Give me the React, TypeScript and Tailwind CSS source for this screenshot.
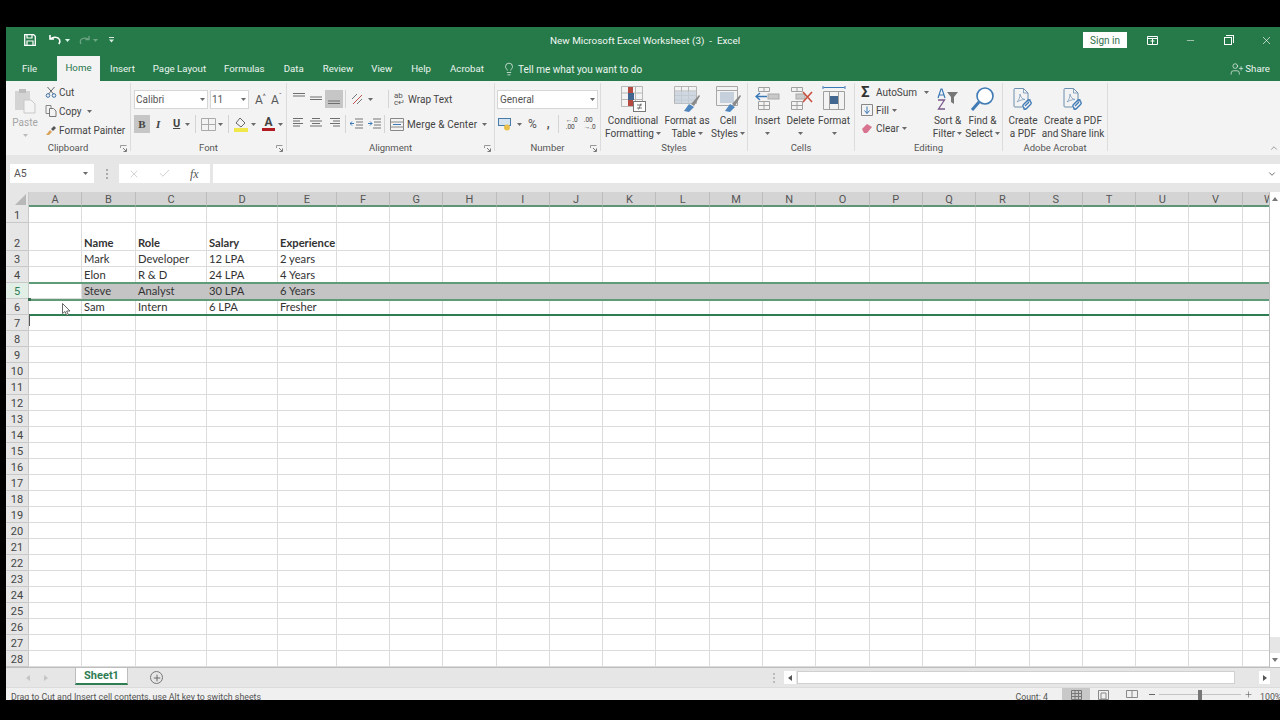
import { ReactNode } from "react";
import { Minus, Plus, X, Check, Lightbulb, UserPlus, ChevronUp, ChevronDown } from "lucide-react";

const UI_FONT = "font-['Roboto',sans-serif]";

const Caret = ({ className = "" }: { className?: string }) => (
  <svg width="5" height="3" viewBox="0 0 5 3" className={`shrink-0 ${className}`}>
    <path d="M0 0h5L2.5 3z" fill="#6a6a6a" />
  </svg>
);

const Launcher = () => (
  <svg width="7" height="7" viewBox="0 0 7 7" className="shrink-0">
    <path d="M.5 3V.5H6.5" stroke="#999" fill="none" />
    <path d="M3 3l3 3M6.5 3.5v3h-3" stroke="#777" fill="none" />
  </svg>
);

const Sep = ({ className = "" }: { className?: string }) => (
  <div className={`w-px h-[18px] bg-[#d4d4d4] shrink-0 ${className}`} />
);

const Group = ({ width, label, launcher, children }: { width: string; label: string; launcher?: boolean; children: ReactNode }) => (
  <div className={`${width} shrink-0 h-[68px] mt-[2px] border-r border-[#dcdcdc] flex flex-col relative`}>
    <div className="h-[58px] flex shrink-0">{children}</div>
    <div className="h-[14px] shrink-0 flex items-center justify-center text-[9.5px] leading-none text-[#555] whitespace-nowrap">{label}</div>
    {launcher && (
      <div className="absolute right-[3px] bottom-[-1px]">
        <Launcher />
      </div>
    )}
  </div>
);

const BigButton = ({ width, icon, lines, caret }: { width: string; icon: ReactNode; lines: string[]; caret?: boolean }) => (
  <div className={`${width} shrink-0 flex flex-col items-center pt-[2px] text-[10px] leading-[13px] text-[#444]`}>
    <div className="h-[28px] mb-[1px] shrink-0 flex items-center justify-center">{icon}</div>
    <div className="whitespace-nowrap h-[13px] shrink-0">{lines[0]}</div>
    <div className="whitespace-nowrap flex items-center gap-[2px] h-[13px] shrink-0">
      {lines[1]}
      {caret && <Caret />}
    </div>
  </div>
);

const AlignLines = ({ widths, y = 0 }: { widths: number[]; y?: number }) => (
  <svg width="12" height="12" viewBox="0 0 12 12">
    {widths.map((w, i) => (
      <rect key={i} x={w < 0 ? 12 + w : w === 8 ? 2 : 0} y={y + i * 2.5} width={Math.abs(w)} height="1" fill="#6e6e6e" />
    ))}
  </svg>
);

const PdfIcon = () => (
  <svg width="24" height="24" viewBox="0 0 24 24" fill="none">
    <path d="M3 2.500a1 1 0 0 1 1-1h8.500l4.500 4.500v9M11 20H4a1 1 0 0 1-1-1V2.500" stroke="#6d8fb0" strokeWidth="1" />
    <path d="M12.500 1.500v4.500h4.500" stroke="#6d8fb0" strokeWidth=".8" />
    <path d="M6 15c2-2 3-5 3-8 .6 3 2 5 5 5.500-3 0-5.500 1-8 2.500z" stroke="#7a9cbd" strokeWidth=".8" />
    <path d="M13.500 21.500l-1-1a2 2 0 0 1 0-3l4-4a2 2 0 0 1 3 0M18.500 13.500l1 1a2 2 0 0 1 0 3l-4 4a2 2 0 0 1-3 0" stroke="#3f7ab5" strokeWidth="1.400" />
    <path d="M14 19l4-4" stroke="#3f7ab5" strokeWidth="1.200" />
  </svg>
);

const StyleGridIcon = ({ children }: { children: ReactNode }) => (
  <svg width="30" height="28" viewBox="0 0 30 28" fill="none">
    {children}
  </svg>
);

const Cursor = () => (
  <svg width="9" height="14" viewBox="0 0 9 14" className="absolute left-[56px] top-[111px]">
    <path d="M.5.5v10l2.500-2 1.800 4 1.600-.7L4.600 8H8z" fill="#fff" stroke="#444" strokeWidth=".8" />
  </svg>
);

const columns = ["A", "B", "C", "D", "E", "F", "G", "H", "I", "J", "K", "L", "M", "N", "O", "P", "Q", "R", "S", "T", "U", "V", "W"];
const rowNumbers = Array.from({ length: 28 }, (_, i) => i + 1);

const cells: Record<number, string[]> = {
  2: ["Name", "Role", "Salary", "Experience"],
  3: ["Mark", "Developer", "12 LPA", "2 years"],
  4: ["Elon", "R & D", "24 LPA", "4 Years"],
  5: ["Steve", "Analyst", "30 LPA", "6 Years"],
  6: ["Sam", "Intern", "6 LPA", "Fresher"],
};

const tabs = [
  { label: "Insert", cls: "ml-[10px]" },
  { label: "Page Layout", cls: "ml-[18px]" },
  { label: "Formulas", cls: "ml-[18px]" },
  { label: "Data", cls: "ml-[19px]" },
  { label: "Review", cls: "ml-[19px]" },
  { label: "View", cls: "ml-[18px]" },
  { label: "Help", cls: "ml-[19px]" },
  { label: "Acrobat", cls: "ml-[19px]" },
];

const TitleBar = () => (
  <div className="h-[28px] bg-[#267a4a] flex items-center pb-[2px] relative text-white shrink-0">
    <svg width="12" height="12" viewBox="0 0 12 12" className="ml-[18px]" fill="none">
      <path d="M.7.7h9l1.600 1.600v9H.7z" stroke="#fff" strokeWidth="1.300" />
      <path d="M3 1v3h5V1M3 11V7h6v4" stroke="#fff" strokeWidth="1.200" />
    </svg>
    <svg width="14" height="12" viewBox="0 0 14 12" className="ml-[13px]" fill="none">
      <path d="M1 1v4h4" stroke="#fff" strokeWidth="1.600" />
      <path d="M1.500 5C4 2.400 9 2.600 10.500 5.500c.8 1.600.4 3.200-.7 4.500" stroke="#fff" strokeWidth="1.600" />
    </svg>
    <svg width="5" height="3" viewBox="0 0 5 3" className="ml-[2px]">
      <path d="M0 0h5L2.500 3z" fill="#dfe" />
    </svg>
    <svg width="13" height="10" viewBox="0 0 13 10" className="ml-[7px]" fill="none">
      <path d="M12 1v3.500H8.400" stroke="#6da585" strokeWidth="1.300" />
      <path d="M11.600 4.500C9.500 2.400 5 2.600 3.600 5 3 6.300 3.200 7.600 4 9" stroke="#6da585" strokeWidth="1.300" />
    </svg>
    <svg width="5" height="3" viewBox="0 0 5 3" className="ml-[3px]">
      <path d="M0 0h5L2.500 3z" fill="#6da585" />
    </svg>
    <svg width="5" height="6" viewBox="0 0 5 6" className="ml-[11px]">
      <path d="M0 0h5v1H0zM0 2.500h5L2.500 5.500z" fill="#d8ebdf" />
    </svg>
    <div className="absolute left-[544px] top-[6px] text-[9.900px] leading-[15px] text-[#f2f8f4] whitespace-nowrap">
      New Microsoft Excel Worksheet (3)&nbsp; -&nbsp; Excel
    </div>
    <div className="ml-auto h-[16px] w-[44px] bg-white text-[#2f6f4b] text-[10px] flex items-center justify-center">Sign in</div>
    <svg width="11" height="9" viewBox="0 0 11 9" className="ml-[20px]" fill="none">
      <path d="M.5.5h10v8H.5zM.5 2.500h10M5.500 2.500v6M3.500 5h4" stroke="#fff" />
    </svg>
    <Minus size={11} strokeWidth={1.200} className="ml-[27px]" />
    <div className="ml-[28px] relative w-[10px] h-[10px]">
      <div className="absolute left-0 bottom-0 w-[8px] h-[8px] border border-white" />
      <div className="absolute right-0 top-0 w-[8px] h-[8px] border-t border-r border-white" />
    </div>
    <X size={13} strokeWidth={1.200} className="ml-[26px] mr-[7px]" />
  </div>
);

const TabRow = () => (
  <div className="h-[26px] bg-[#267a4a] flex items-end text-[9.700px] text-[#eaf4ee] shrink-0">
    <div className="h-[24px] ml-[16px] w-[16px] flex items-center">File</div>
    <div className="h-[25px] w-[43px] ml-[19px] bg-[#f3f3f3] text-[#27754a] flex items-center justify-center">Home</div>
    {tabs.map((t) => (
      <div key={t.label} className={`h-[24px] flex items-center ${t.cls}`}>
        {t.label}
      </div>
    ))}
    <div className="h-[24px] flex items-center ml-[18px] gap-[2px]">
      <Lightbulb size={14} strokeWidth={1.300} />
      <span className="text-[10px]">Tell me what you want to do</span>
    </div>
    <div className="h-[24px] flex items-center ml-auto mr-[10px] gap-[1px]">
      <UserPlus size={14} strokeWidth={1.200} />
      <span>Share</span>
    </div>
  </div>
);

const Ribbon = () => (
  <div className="h-[74px] bg-[#f3f3f3] flex text-[10px] text-[#444] shrink-0 relative">
    <Group width="w-[125px]" label="Clipboard" launcher>
      <div className="w-[38px] flex flex-col items-center">
        <svg width="22" height="26" viewBox="0 0 22 26" className="mt-[5px] shrink-0" fill="none">
          <rect x="1" y="3" width="15" height="19" fill="#d4d4d4" />
          <rect x="5" y="1" width="7" height="4" fill="#bdbdbd" />
          <path d="M10 12h7l4 4v9H10z" fill="#f4f4f4" stroke="#c9c9c9" />
        </svg>
        <div className="text-[#a5a5a5] leading-[12px] mt-[3px]">Paste</div>
        <Caret className="mt-[5px] opacity-40" />
      </div>
      <div className="flex flex-col ml-[1px] gap-[1px]">
        <div className="h-[18px] flex items-center gap-[2px]">
          <svg width="12" height="12" viewBox="0 0 12 12" fill="none">
            <path d="M2.500 1l6 7M9.500 1l-6 7" stroke="#666" />
            <circle cx="3" cy="9.500" r="1.800" stroke="#3c6fa5" />
            <circle cx="9" cy="9.500" r="1.800" stroke="#3c6fa5" />
          </svg>
          Cut
        </div>
        <div className="h-[18px] flex items-center gap-[2px]">
          <svg width="12" height="12" viewBox="0 0 12 12" fill="none">
            <path d="M1 .5h5v8H1z" stroke="#888" />
            <path d="M4.500 3.500h4l2.500 2.500v5.500h-6.500z" fill="#f3f3f3" stroke="#777" />
          </svg>
          Copy
          <Caret className="ml-[3px]" />
        </div>
        <div className="h-[18px] flex items-center gap-[2px] whitespace-nowrap">
          <svg width="12" height="12" viewBox="0 0 12 12" fill="none">
            <path d="M1 11l4-5 2 2-3 3z" fill="#d9a25a" />
            <path d="M6 5l3-3 2 2-3 3z" fill="#555" />
          </svg>
          Format Painter
        </div>
      </div>
    </Group>

    <Group width="w-[156px]" label="Font" launcher>
      <div className="flex flex-col pl-[3px] pt-[7px]">
        <div className="flex items-center h-[19px]">
          <div className="w-[74px] h-[19px] bg-white border border-[#d6d6d6] flex items-center pl-[1px] pr-[2px] justify-between text-[#555]">
            Calibri
            <Caret />
          </div>
          <div className="w-[39px] h-[19px] ml-[2px] bg-white border border-[#d6d6d6] flex items-center pl-[1px] pr-[2px] justify-between text-[#555]">
            11
            <Caret />
          </div>
          <div className="ml-[6px] text-[12px] text-[#555] w-[16px] leading-none whitespace-nowrap">
            A<span className="text-[7px] align-top">^</span>
          </div>
          <div className="text-[12px] text-[#555] leading-none whitespace-nowrap">
            A<span className="text-[7px] align-top">ˇ</span>
          </div>
        </div>
        <div className="flex items-center h-[20px] mt-[5px]">
          <div className="w-[16px] h-[18px] bg-[#c6c6c6] flex items-center justify-center font-bold font-['Liberation_Serif',serif] text-[11px]">B</div>
          <div className="ml-[6px] w-[8px] text-[11px] italic font-bold font-['Liberation_Serif',serif]">I</div>
          <div className="ml-[9px] w-[9px] text-[11px] underline font-bold text-[#444]">U</div>
          <Caret className="ml-[3px]" />
          <Sep className="ml-[5px]" />
          <svg width="15" height="13" viewBox="0 0 15 13" className="ml-[5px]" fill="none">
            <path d="M.5.5h14v12H.5zM7.500.5v12M.5 6.500h14" stroke="#aaa" />
          </svg>
          <Caret className="ml-[2px]" />
          <Sep className="ml-[5px]" />
          <svg width="16" height="15" viewBox="0 0 16 15" className="ml-[4px]" fill="none">
            <path d="M7 1l5 5-4 4-5-4z" stroke="#666" />
            <rect x="1" y="11" width="14" height="4" fill="#f0e84a" />
          </svg>
          <Caret className="ml-[2px]" />
          <div className="ml-[6px] w-[13px] flex flex-col items-center">
            <span className="font-bold text-[12px] leading-[11px] text-[#444]">A</span>
            <div className="w-[13px] h-[3px] bg-[#b01a20]" />
          </div>
          <Caret className="ml-[3px]" />
        </div>
      </div>
    </Group>

    <Group width="w-[208px]" label="Alignment" launcher>
      <div className="flex flex-col pl-[6px] pt-[6px]">
        <div className="flex items-center h-[20px]">
          <AlignLines widths={[12, 12, 0]} />
          <div className="ml-[5px]"><AlignLines widths={[0, 12, 12]} y={1} /></div>
          <div className="ml-[3px] w-[18px] h-[18px] bg-[#c6c6c6] flex items-center justify-center">
            <AlignLines widths={[0, 12, 12]} y={5} />
          </div>
          <Sep className="ml-[2px]" />
          <svg width="14" height="13" viewBox="0 0 14 13" className="ml-[5px]" fill="none">
            <path d="M2 11l9-9" stroke="#c0504d" />
            <path d="M1 6l5-5M6 11l5-5" stroke="#777" />
          </svg>
          <Caret className="ml-[3px]" />
          <Sep className="ml-[15px]" />
          <div className="ml-[5px] text-[8px] leading-[7px] text-[#555] w-[13px]">ab<br />c↵</div>
          <span className="ml-[1px]">Wrap Text</span>
        </div>
        <div className="flex items-center h-[20px] mt-[5px]">
          <AlignLines widths={[10, 7, 10, 7]} />
          <div className="ml-[5px]"><AlignLines widths={[8, 12, 8, 12]} /></div>
          <div className="ml-[6px]"><AlignLines widths={[-10, -7, -10, -7]} /></div>
          <Sep className="ml-[5px]" />
          <div className="ml-[4px]"><svg width="13" height="12" viewBox="0 0 13 12" fill="none"><path d="M5 1h8M6 4h7M6 7h7M5 10h8" stroke="#777" /><path d="M0 5.500h4M2 3.500l-2 2 2 2" stroke="#3a79b8" /></svg></div>
          <div className="ml-[5px]"><svg width="13" height="12" viewBox="0 0 13 12" fill="none"><path d="M5 1h8M6 4h7M6 7h7M5 10h8" stroke="#777" /><path d="M0 5.500h4M2 3.500l2 2-2 2" stroke="#3a79b8" /></svg></div>
          <Sep className="ml-[3px]" />
          <svg width="14" height="13" viewBox="0 0 14 13" className="ml-[5px]" fill="none">
            <path d="M.5.5h13v12H.5zM.5 4h13M.5 9h13" stroke="#888" />
            <path d="M3 6.500h8" stroke="#3a79b8" />
          </svg>
          <span className="ml-[3px] whitespace-nowrap tracking-[0.1px]">Merge &amp; Center</span>
          <Caret className="ml-[5px]" />
        </div>
      </div>
    </Group>

    <Group width="w-[106px]" label="Number" launcher>
      <div className="flex flex-col pl-[2px] pt-[7px]">
        <div className="w-[101px] h-[19px] bg-white border border-[#d6d6d6] flex items-center px-[2px] justify-between text-[#555]">
          General
          <Caret />
        </div>
        <div className="flex items-center h-[20px] mt-[5px] pl-[1px]">
          <svg width="15" height="13" viewBox="0 0 15 13" fill="none">
            <rect x=".5" y=".5" width="12" height="7" fill="#d6e4f0" stroke="#4a7ba8" />
            <circle cx="9" cy="9.500" r="3" fill="#e8c14a" />
          </svg>
          <Caret className="ml-[4px]" />
          <span className="ml-[6px] text-[12px] leading-none text-[#555]">%</span>
          <span className="ml-[10px] font-bold text-[12px] leading-none text-[#555]">,</span>
          <Sep className="ml-[8px]" />
          <div className="ml-[7px] text-[6.500px] leading-[7px] text-[#444] w-[14px]">←.0<br />.00</div>
          <div className="ml-[4px] text-[6.500px] leading-[7px] text-[#444] w-[14px]">.00<br />→.0</div>
        </div>
      </div>
    </Group>

    <Group width="w-[147px]" label="Styles">
      <BigButton width="w-[66px] ml-[-1px]" caret lines={["Conditional", "Formatting"]} icon={
        <StyleGridIcon>
          <path d="M3.500 1.500h21v20h-21zM3.500 8h21M3.500 14.500h21M10.500 1.500v20M17.500 1.500v20" stroke="#b8b8b8" />
          <rect x="10" y="2" width="5" height="6" fill="#b5483f" />
          <rect x="10" y="8" width="6" height="7" fill="#41668f" />
          <rect x="10" y="15" width="5" height="6" fill="#b5483f" />
          <rect x="15.500" y="16.500" width="12" height="10" fill="#fff" stroke="#777" />
          <path d="M19 20h5M19 23h5M23 18.500l-2.500 6" stroke="#555" strokeWidth=".8" />
        </StyleGridIcon>
      } />
      <BigButton width="w-[42px]" caret lines={["Format as", "Table"]} icon={
        <StyleGridIcon>
          <path d="M2.500 1.500h22v17h-22zM2.500 6h22M2.500 10.500h22M2.500 15h22M9.500 1.500v17M16.500 1.500v17" stroke="#b5b5b5" />
          <rect x="3" y="6.500" width="21" height="12" fill="#c5d0dc" opacity=".8" />
          <path d="M12 26l5-7 5 3-5 5z" fill="#4e86bd" />
          <path d="M19 19l8-9 1 1-6 10z" fill="#8a8a8a" />
        </StyleGridIcon>
      } />
      <BigButton width="w-[38px] ml-[1px]" caret lines={["Cell", "Styles"]} icon={
        <StyleGridIcon>
          <path d="M3.500 1.500h21v19h-21zM3.500 5.500h21" stroke="#a8a8a8" />
          <rect x="7" y="7" width="14" height="11" fill="#c5d0dc" />
          <path d="M12 26l5-7 5 3-5 5z" fill="#4e86bd" />
          <path d="M19 19l8-9 1 1-6 10z" fill="#8a8a8a" />
        </StyleGridIcon>
      } />
    </Group>

    <Group width="w-[107px]" label="Cells">
      <BigButton width="w-[33px] ml-[3px]" lines={["Insert", ""]} caret icon={
        <svg width="26" height="26" viewBox="0 0 26 26" fill="none">
          <path d="M3.500 1.500h11v4h-11zM9 1.500v4M3.500 15.500h11v8h-11zM9 15.500v8M3.500 19.500h11" stroke="#a0a0a0" />
          <rect x="13" y="8" width="11" height="5" fill="#c9c9c9" stroke="#aaa" />
          <path d="M1 10.500h11M5 7l-4 3.500L5 14" stroke="#3a79b8" strokeWidth="1.400" />
        </svg>
      } />
      <BigButton width="w-[33px]" lines={["Delete", ""]} caret icon={
        <svg width="26" height="26" viewBox="0 0 26 26" fill="none">
          <path d="M3.500 1.500h11v4h-11zM9 1.500v4M3.500 15.500h11v8h-11zM9 15.500v8M3.500 19.500h11" stroke="#a0a0a0" />
          <rect x="8" y="8" width="9" height="5" fill="#c9c9c9" stroke="#aaa" />
          <path d="M15 6l9 10M24 6l-9 10" stroke="#c8503f" strokeWidth="1.600" />
        </svg>
      } />
      <BigButton width="w-[34px]" lines={["Format", ""]} caret icon={
        <svg width="26" height="27" viewBox="0 0 26 27" fill="none">
          <path d="M2.500 1.500h21M2 0v3M24 0v3" stroke="#3a79b8" />
          <path d="M2.500 5.500h21v18h-21zM8.500 5.500v18M17.500 5.500v18" stroke="#a0a0a0" />
          <rect x="9" y="10" width="8" height="8" fill="#41668f" />
        </svg>
      } />
    </Group>

    <Group width="w-[148px]" label="Editing">
      <div className="flex flex-col pl-[6px] w-[78px]">
        <div className="h-[18px] flex items-center gap-[3px] whitespace-nowrap">
          <span className="text-[15px] leading-none text-[#333] w-[12px] font-bold">Σ</span>
          AutoSum
          <Caret className="ml-[4px]" />
        </div>
        <div className="h-[18px] flex items-center gap-[3px]">
          <svg width="12" height="12" viewBox="0 0 12 12" fill="none">
            <path d="M.5.500h11v11H.5z" stroke="#888" />
            <path d="M6 2.500v7M3.500 6.500L6 9.500l2.500-3" stroke="#3a79b8" />
          </svg>
          Fill
          <Caret />
        </div>
        <div className="h-[18px] flex items-center gap-[3px]">
          <svg width="12" height="12" viewBox="0 0 12 12">
            <path d="M1 7l5-5 5 3-5 6H3z" fill="#d8748f" />
          </svg>
          Clear
          <Caret />
        </div>
      </div>
      <BigButton width="w-[35px] ml-[-3px]" caret lines={["Sort &", "Filter"]} icon={
        <svg width="24" height="24" viewBox="0 0 24 24" fill="none">
          <path d="M2 11l3-9h1l3 9M3 8h5" stroke="#3a79b8" strokeWidth="1.200" />
          <path d="M2 13h6.500L2.500 22H9" stroke="#7a5a8a" strokeWidth="1.300" />
          <path d="M11 5h11l-4 5v7l-3-2v-5z" fill="#777" />
        </svg>
      } />
      <BigButton width="w-[35px]" caret lines={["Find &", "Select"]} icon={
        <svg width="26" height="26" viewBox="0 0 26 26" fill="none">
          <circle cx="15" cy="10" r="8" stroke="#3f7ab5" strokeWidth="1.600" fill="#fff" />
          <path d="M9 16l-7 8" stroke="#3f7ab5" strokeWidth="3" />
        </svg>
      } />
    </Group>

    <Group width="w-[105px]" label="Adobe Acrobat">
      <BigButton width="w-[34px] ml-[3px]" lines={["Create", "a PDF"]} icon={<PdfIcon />} />
      <BigButton width="w-[64px] ml-[1px]" lines={["Create a PDF", "and Share link"]} icon={<PdfIcon />} />
    </Group>

    <ChevronUp size={10} strokeWidth={1.500} className="absolute right-[1px] bottom-[2px] text-[#666]" />
  </div>
);

const FormulaBar = () => (
  <div className="h-[37px] bg-[#e6e6e6] flex pt-[9px] shrink-0 text-[#555]">
    <div className="ml-[4px] w-[84px] h-[19px] bg-white flex items-center pl-[4px] pr-[6px] justify-between text-[10.500px]">
      A5
      <Caret />
    </div>
    <div className="ml-[11px] w-[4px] h-[19px] flex flex-col justify-center gap-[2px] items-center">
      <div className="w-[2px] h-[2px] bg-[#aaa]" />
      <div className="w-[2px] h-[2px] bg-[#aaa]" />
      <div className="w-[2px] h-[2px] bg-[#aaa]" />
    </div>
    <div className="ml-[10px] w-[91px] h-[19px] bg-white flex items-center">
      <X size={12} strokeWidth={1.300} className="ml-[9px] text-[#bbb]" />
      <Check size={13} strokeWidth={1.300} className="ml-[18px] text-[#bbb]" />
      <span className="ml-[19px] italic text-[12px] font-['Liberation_Serif',serif] text-[#555]">fx</span>
    </div>
    <div className="ml-[3px] flex-1 h-[19px] bg-white flex items-center justify-end pr-[3px]">
      <ChevronDown size={10} strokeWidth={2} className="text-[#555]" />
    </div>
  </div>
);

const Row = ({ r }: { r: number }) => {
  const selected = r === 5;
  const values = cells[r] ?? [];
  return (
    <>
      <div className={`border-r border-b border-[#c8c8c8] flex items-end justify-center leading-[13px] ${UI_FONT} text-[11px] ${selected ? "bg-[#e1efe6] text-[#2f7d52]" : "bg-[#e6e6e6] text-[#444]"}`}>
        {r}
      </div>
      {columns.map((c, i) => {
        const text = i >= 1 && i <= 4 ? values[i - 1] : undefined;
        const bg = selected && i > 0 ? "bg-[#c4c4c4] border-[#c4c4c4]" : "border-[#dcdcdc]";
        return (
          <div key={c} className={`border-r border-b ${bg} pl-[2px] flex items-end leading-[14px] whitespace-nowrap ${r === 2 ? "font-bold" : ""}`}>
            {text}
          </div>
        );
      })}
    </>
  );
};

const Sheet = () => (
  <div className="flex h-[475px] shrink-0 bg-white overflow-hidden">
    <div className="w-[1263px] shrink-0 relative overflow-hidden">
      <div className="grid w-[1300px] grid-cols-[23px_53px_54px_71px_71px_59px_53px_repeat(17,53.3px)] grid-rows-[15px_16px_28px_repeat(26,16px)] font-['Lato',sans-serif] text-[11.200px] text-[#333]">
        <div className="bg-[#e6e6e6] border-r border-[#c8c8c8] flex items-end justify-end">
          <svg width="11" height="11" viewBox="0 0 11 11" className="mr-[2px] mb-[2px]">
            <path d="M11 0v11H0z" fill="#b8b8b8" />
          </svg>
        </div>
        {columns.map((c) => (
          <div key={c} className={`bg-[#d4d4d4] border-r border-[#bdbdbd] border-b-2 border-b-[#5f9477] flex items-center justify-center pt-[1px] leading-none text-[#555] ${UI_FONT} text-[11px]`}>
            {c}
          </div>
        ))}
        {rowNumbers.map((r) => (
          <Row key={r} r={r} />
        ))}
      </div>
      <div className="absolute left-[23px] right-0 top-[90px] h-[2px] bg-[#5f9a79]" />
      <div className="absolute left-[23px] right-0 top-[107px] h-[2px] bg-[#5f9a79]" />
      <div className="absolute left-[23px] right-0 top-[122px] h-[2px] bg-[#2f7d52]" />
      <div className="absolute left-[22px] top-[106px] w-[3px] h-[3px] bg-[#3b6f52]" />
      <div className="absolute left-[23px] top-[122px] w-px h-[12px] bg-[#555]" />
      <Cursor />
    </div>
    <div className="flex-1 bg-white border-l border-[#c0c0c0] flex flex-col items-center">
      <svg width="6" height="4" viewBox="0 0 6 4" className="mt-[5px]"><path d="M0 4h6L3 0z" fill="#777" /></svg>
      <div className="mt-auto w-full h-[16px] bg-[#e6e6e6]" />
      <div className="w-full h-[14px] flex items-center justify-center">
        <svg width="6" height="4" viewBox="0 0 6 4"><path d="M0 0h6L3 4z" fill="#777" /></svg>
      </div>
    </div>
  </div>
);

const TabBar = () => (
  <div className="h-[20px] bg-[#e6e6e6] border-t border-[#bdbdbd] flex shrink-0 text-[#555]">
    <svg width="4" height="6" viewBox="0 0 4 6" className="ml-[20px] mt-[7px]"><path d="M4 0v6L0 3z" fill="#c4c4c4" /></svg>
    <svg width="4" height="6" viewBox="0 0 4 6" className="ml-[14px] mt-[7px]"><path d="M0 0v6l4-3z" fill="#c4c4c4" /></svg>
    <div className="ml-[27px] w-[53px] h-[17px] pt-[1px] bg-white border-b-2 border-[#2f7d52] border-x border-x-[#bdbdbd] text-[#2f7d52] font-bold text-[11px] flex items-center justify-center">Sheet1</div>
    <div className="ml-[22px] mt-[3px] w-[13px] h-[13px] rounded-full border border-[#777] flex items-center justify-center">
      <Plus size={10} strokeWidth={2} />
    </div>
    <div className="ml-[610px] mt-[5px] flex flex-col gap-[2px]">
      <div className="w-[2px] h-[2px] bg-[#bbb]" />
      <div className="w-[2px] h-[2px] bg-[#bbb]" />
      <div className="w-[2px] h-[2px] bg-[#bbb]" />
    </div>
    <div className="ml-[9px] mt-[3px] w-[12px] h-[13px] bg-white flex items-center justify-center">
      <svg width="4" height="6" viewBox="0 0 4 6"><path d="M4 0v6L0 3z" fill="#555" /></svg>
    </div>
    <div className="ml-[1px] mt-[3px] w-[438px] h-[13px] bg-white border border-[#d0d0d0]" />
    <div className="ml-[24px] mt-[3px] w-[11px] h-[13px] bg-white flex items-center justify-center">
      <svg width="4" height="6" viewBox="0 0 4 6"><path d="M0 0v6l4-3z" fill="#555" /></svg>
    </div>
  </div>
);

const StatusBar = () => (
  <div className="h-[13px] bg-[#f0f0f0] border-t border-[#dcdcdc] flex text-[8.800px] leading-[18px] text-[#555] shrink-0 overflow-hidden">
    <div className="ml-[5px] whitespace-nowrap">Drag to Cut and Insert cell contents, use Alt key to switch sheets</div>
    <div className="ml-auto whitespace-nowrap">Count: 4</div>
    <div className="ml-[14px] w-[28px] h-[13px] bg-[#c8c8c8] flex justify-center pt-[2px]">
      <svg width="11" height="10" viewBox="0 0 11 10" fill="none"><path d="M.5.5h10v9H.5zM4 .5v9M7.500.5v9M.5 3.500h10M.5 6.500h10" stroke="#777" /></svg>
    </div>
    <svg width="11" height="10" viewBox="0 0 11 10" className="ml-[8px] mt-[2px] shrink-0" fill="none"><path d="M.5.5h10v9H.5zM3 3h5v6H3z" stroke="#888" /></svg>
    <svg width="12" height="10" viewBox="0 0 12 10" className="ml-[17px] mt-[2px] shrink-0" fill="none"><path d="M.5.5h11v7H.5zM6 .5v7" stroke="#888" /></svg>
    <div className="ml-[11px] w-[6px] h-px mt-[6px] bg-[#666]" />
    <div className="ml-[4px] w-[39px] h-px mt-[6px] bg-[#c4c4c4]" />
    <div className="w-[4px] h-[10px] mt-[2px] bg-[#777]" />
    <div className="w-[39px] h-px mt-[6px] bg-[#c4c4c4]" />
    <Plus size={9} strokeWidth={1.500} className="ml-[3px] mt-[2px] text-[#555] shrink-0" />
    <div className="ml-[7px] w-[20px] shrink-0 whitespace-nowrap">100%</div>
  </div>
);

export default function App() {
  return (
    <div className={`w-[1280px] h-[720px] bg-black pt-[27px] pl-[6px] overflow-hidden ${UI_FONT}`}>
      <div className="w-[1274px] h-[673px] flex flex-col">
        <TitleBar />
        <TabRow />
        <Ribbon />
        <FormulaBar />
        <Sheet />
        <TabBar />
        <StatusBar />
      </div>
    </div>
  );
}
